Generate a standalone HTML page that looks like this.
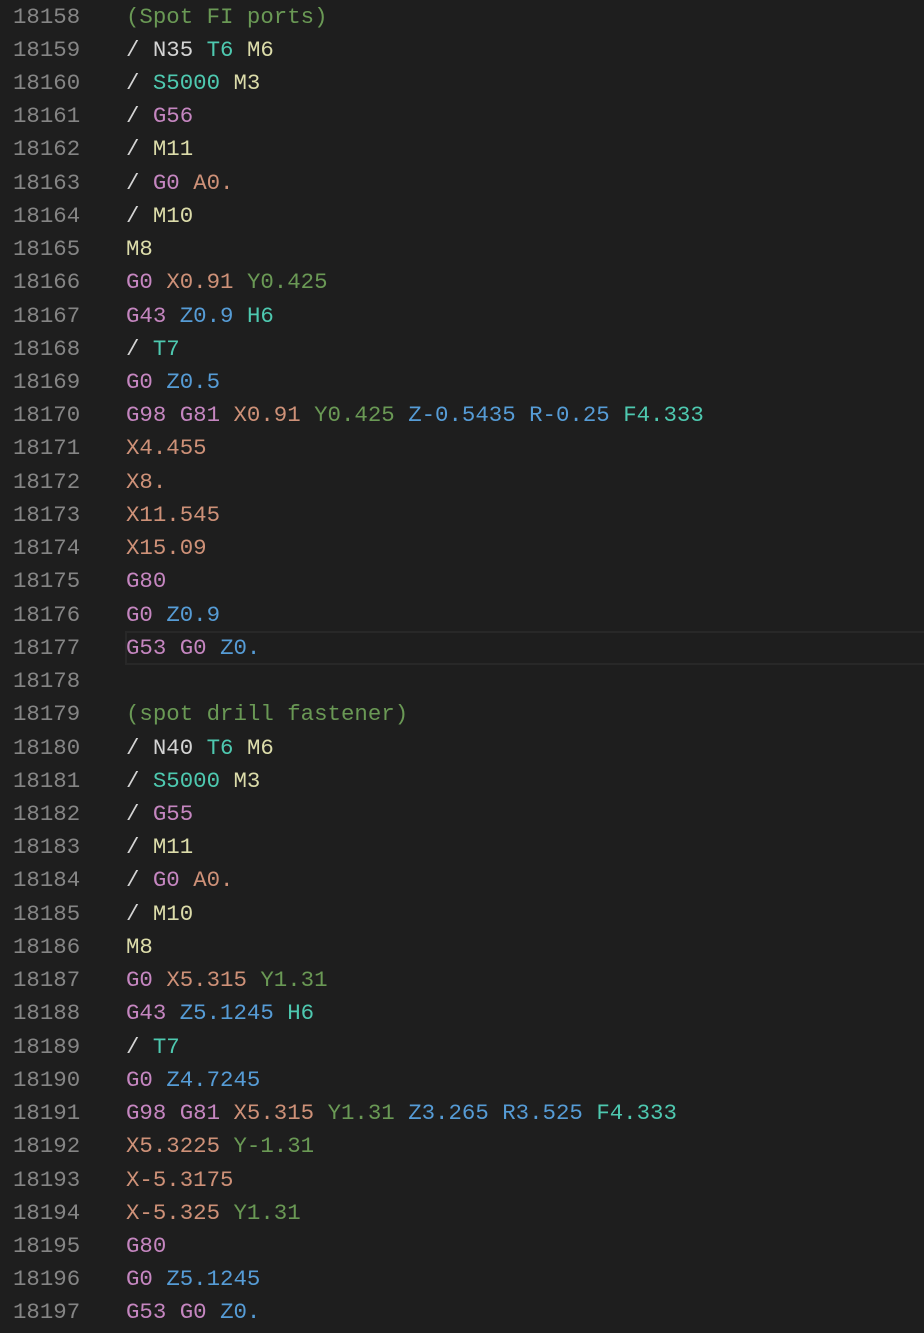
<!DOCTYPE html>
<html><head><meta charset="utf-8"><style>
html,body{margin:0;padding:0;background:#1e1e1e;width:924px;height:1333px;overflow:hidden}
.l{position:absolute;left:0;height:33.23px;line-height:33.23px;font-family:"Liberation Mono",monospace;font-size:22.4px;white-space:pre;width:924px}
.n{position:absolute;left:13px;color:#858585}
.c{position:absolute;left:126px;color:#d4d4d4}
.g{color:#c586c0}.x{color:#ce9178}.y{color:#6a9955}.z{color:#569cd6}.t{color:#4ec9b0}.m{color:#dcdcaa}.cm{color:#6a9955}
.cur{position:absolute;left:125px;top:631px;width:805px;height:30px;border:2px solid #282828;border-right:none}
</style></head><body>
<div class="cur"></div>
<div id="w"></div>
<script>
var L=[
'<span class="cm">(Spot FI ports)</span>',
'/ N35 <span class="t">T6</span> <span class="m">M6</span>',
'/ <span class="t">S5000</span> <span class="m">M3</span>',
'/ <span class="g">G56</span>',
'/ <span class="m">M11</span>',
'/ <span class="g">G0</span> <span class="x">A0.</span>',
'/ <span class="m">M10</span>',
'<span class="m">M8</span>',
'<span class="g">G0</span> <span class="x">X0.91</span> <span class="y">Y0.425</span>',
'<span class="g">G43</span> <span class="z">Z0.9</span> <span class="t">H6</span>',
'/ <span class="t">T7</span>',
'<span class="g">G0</span> <span class="z">Z0.5</span>',
'<span class="g">G98</span> <span class="g">G81</span> <span class="x">X0.91</span> <span class="y">Y0.425</span> <span class="z">Z-0.5435</span> <span class="z">R-0.25</span> <span class="t">F4.333</span>',
'<span class="x">X4.455</span>',
'<span class="x">X8.</span>',
'<span class="x">X11.545</span>',
'<span class="x">X15.09</span>',
'<span class="g">G80</span>',
'<span class="g">G0</span> <span class="z">Z0.9</span>',
'<span class="g">G53</span> <span class="g">G0</span> <span class="z">Z0.</span>',
'',
'<span class="cm">(spot drill fastener)</span>',
'/ N40 <span class="t">T6</span> <span class="m">M6</span>',
'/ <span class="t">S5000</span> <span class="m">M3</span>',
'/ <span class="g">G55</span>',
'/ <span class="m">M11</span>',
'/ <span class="g">G0</span> <span class="x">A0.</span>',
'/ <span class="m">M10</span>',
'<span class="m">M8</span>',
'<span class="g">G0</span> <span class="x">X5.315</span> <span class="y">Y1.31</span>',
'<span class="g">G43</span> <span class="z">Z5.1245</span> <span class="t">H6</span>',
'/ <span class="t">T7</span>',
'<span class="g">G0</span> <span class="z">Z4.7245</span>',
'<span class="g">G98</span> <span class="g">G81</span> <span class="x">X5.315</span> <span class="y">Y1.31</span> <span class="z">Z3.265</span> <span class="z">R3.525</span> <span class="t">F4.333</span>',
'<span class="x">X5.3225</span> <span class="y">Y-1.31</span>',
'<span class="x">X-5.3175</span>',
'<span class="x">X-5.325</span> <span class="y">Y1.31</span>',
'<span class="g">G80</span>',
'<span class="g">G0</span> <span class="z">Z5.1245</span>',
'<span class="g">G53</span> <span class="g">G0</span> <span class="z">Z0.</span>'
];
var h='';
for(var i=0;i<L.length;i++){h+='<div class="l" style="top:'+(0.5+i*33.23).toFixed(2)+'px"><span class="n">'+(18158+i)+'</span><span class="c">'+L[i]+'</span></div>';}
document.getElementById('w').innerHTML=h;
</script>
</body></html>
